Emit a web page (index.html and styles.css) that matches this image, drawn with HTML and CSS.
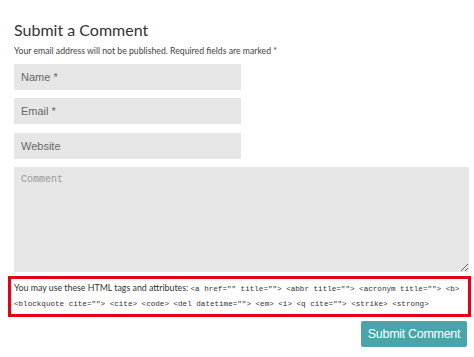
FILE: index.html
```html
<!DOCTYPE html>
<html>
<head>
<meta charset="utf-8">
<title>Submit a Comment</title>
<link rel="stylesheet" href="styles.css">
</head>
<body>
<div class="respond">
  <h3 class="reply-title">Submit a Comment</h3>
  <p class="notes">Your email address will not be published. Required fields are marked *</p>
  <form class="comment-form">
    <input class="field" type="text" placeholder="Name *">
    <input class="field" type="text" placeholder="Email *">
    <input class="field" type="text" placeholder="Website">
    <textarea class="comment" placeholder="Comment"></textarea>
    <div class="allowed">
      <p>You may use these HTML tags and attributes: <code>&lt;a href="" title=""&gt; &lt;abbr title=""&gt; &lt;acronym title=""&gt; &lt;b&gt;</code> <code>&lt;blockquote cite=""&gt; &lt;cite&gt; &lt;code&gt; &lt;del datetime=""&gt; &lt;em&gt; &lt;i&gt; &lt;q cite=""&gt; &lt;strike&gt; &lt;strong&gt;</code></p>
    </div>
    <div class="submit-row">
      <button class="submit" type="button">Submit Comment</button>
    </div>
  </form>
</div>
</body>
</html>
```

FILE: styles.css
```css
body {
  margin: 0;
  background: #fff;
  color: #333;
}

.respond {
  padding: 21px 5px 0 14px;
}

.reply-title {
  margin: 0;
  font-family: "Lato", "Open Sans", sans-serif;
  font-weight: normal;
  font-size: 16px;
  line-height: 18px;
  color: #333;
}

.notes {
  margin: 6px 0 0;
  font-family: "Lato", "Open Sans", sans-serif;
  font-size: 8.7px;
  line-height: 12px;
  color: #444;
}

.comment-form {
  display: flex;
  flex-direction: column;
  margin-top: 7px;
}

.field {
  box-sizing: border-box;
  width: 227px;
  height: 26px;
  margin: 0 0 8px;
  padding: 0 7px;
  border: none;
  background: #e6e6e6;
  font-family: "Liberation Sans", Arial, sans-serif;
  font-size: 11px;
  color: #666;
  outline: none;
}

.field:nth-child(2) {
  margin-bottom: 9px;
}

.field::placeholder {
  color: #666;
}

.comment {
  box-sizing: border-box;
  width: 455px;
  height: 105px;
  margin: 0;
  padding: 7px 7px;
  border: none;
  background: #e6e6e6;
  font-family: "Liberation Mono", "Courier New", monospace;
  font-size: 10px;
  color: #999;
  outline: none;
}

.comment::placeholder {
  color: #999;
}

.allowed {
  margin: 4px -2px 0 -6px;
  border: 3px solid #e2001a;
  padding: 2px 3px 3px;
}

.allowed p {
  margin: 0;
  font-family: "Lato", "Open Sans", sans-serif;
  font-size: 8.8px;
  line-height: 14px;
  color: #333;
}

.allowed code {
  font-family: "Liberation Mono", "Courier New", monospace;
  font-size: 7.6px;
  line-height: 14px;
  color: #333;
}

.submit-row {
  display: flex;
  justify-content: flex-end;
  margin-top: 4px;
  padding-right: 2px;
}

.submit {
  width: 106px;
  height: 26px;
  padding: 0;
  border: none;
  border-radius: 2px;
  background: #4ba3ac;
  font-family: "Liberation Sans", Arial, sans-serif;
  font-size: 12.5px;
  letter-spacing: -0.3px;
  color: #fff;
}
```
